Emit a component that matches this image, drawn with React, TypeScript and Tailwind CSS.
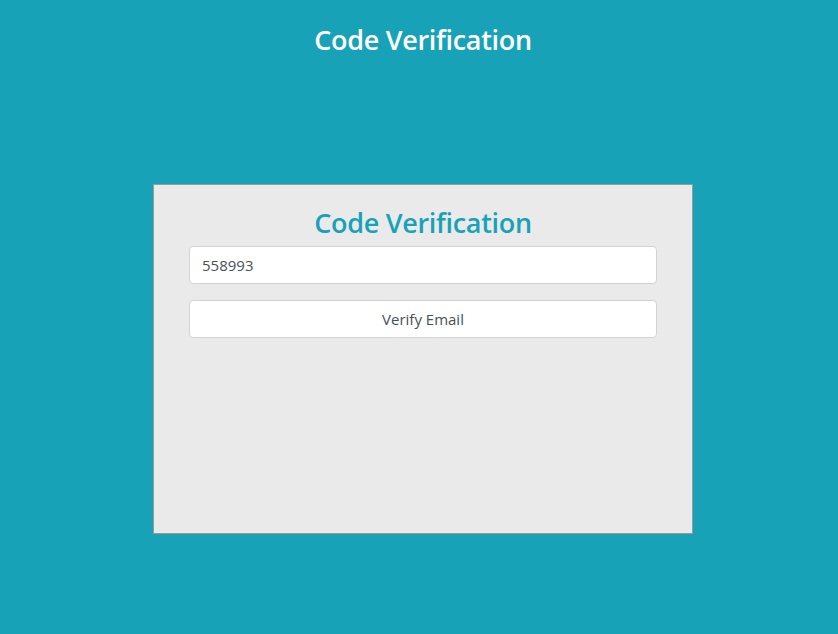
import React from "react";

export default function App() {
    return (
        <div
            className="min-h-[634px] bg-[#17a2b8] flex flex-col items-center pl-2"
            style={{ fontFamily: '"Open Sans", "Noto Sans", sans-serif' }}
        >
            {/* top title */}
            <h1 className="mt-[21px] text-[27px] leading-[38px] font-semibold text-white tracking-[-0.3px]">
                Code Verification
            </h1>

            {/* card */}
            <div className="mt-[125px] w-[540px] h-[350px] bg-[#eaeaea] border border-[#9a9a9a] px-[35px] pt-[18px]">
                <h2 className="text-center text-[27px] leading-[40px] font-semibold text-[#17a2b8] tracking-[-0.3px]">
                    Code Verification
                </h2>
                <input
                    defaultValue="558993"
                    className="mt-[3px] w-full h-[38px] bg-white border border-[#ced4da] rounded-[4px] px-3 text-[15px] text-[#495057] outline-none"
                />
                <button className="mt-4 w-full h-[38px] bg-white border border-[#ced4da] rounded-[4px] text-[15px] text-[#495057]">
                    Verify Email
                </button>
            </div>
        </div>
    );
}
